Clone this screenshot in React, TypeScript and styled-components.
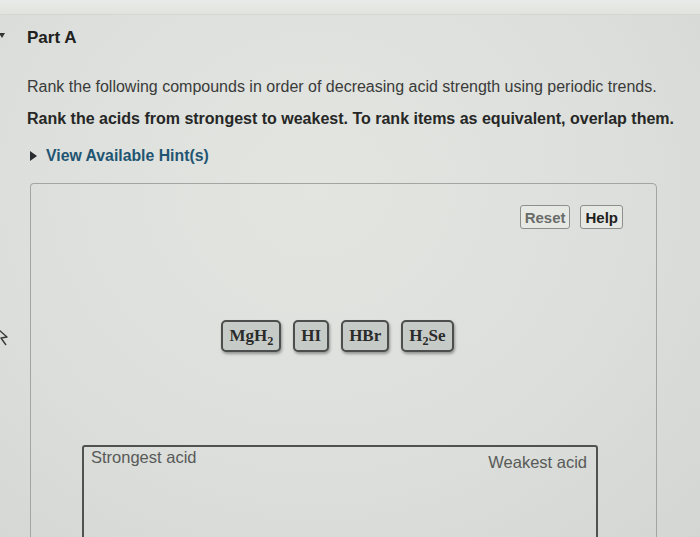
import React from 'react'
import styled, { createGlobalStyle } from 'styled-components'

const GlobalStyle = createGlobalStyle`
  html, body {
    margin: 0;
    padding: 0;
    background: #dcdfdb;
  }
`

const Page = styled.div`
  position: relative;
  height: 537px;
  overflow: hidden;
  background: radial-gradient(ellipse at 45% 35%, #e3e5e1 0%, #dcdfdb 55%, #d3d6d2 100%);
  font-family: 'Liberation Sans', Arial, sans-serif;
  color: #2a2b2a;
`

const TopStrip = styled.div`
  height: 14px;
  background: linear-gradient(#e9ebe8, #e1e3df);
  border-bottom: 1px solid #d4d6d2;
`

const Content = styled.div`
  padding-left: 27px;
`

const PartHeader = styled.h2`
  position: relative;
  margin: 13px 0 0;
  font-size: 17px;
  line-height: 20px;
  font-weight: 700;
  color: #202120;
`

const Collapse = styled.span`
  position: absolute;
  left: -28px;
  top: 5px;
  width: 0;
  height: 0;
  border-left: 3px solid transparent;
  border-right: 3px solid transparent;
  border-top: 5px solid #333;
`

const Prompt = styled.p<{ $bold?: boolean }>`
  margin: ${p => (p.$bold ? '10px' : '28px')} 0 0;
  font-size: 16px;
  line-height: 22px;
  font-weight: ${p => (p.$bold ? 700 : 400)};
  color: ${p => (p.$bold ? '#262726' : '#3a3b3a')};
`

const HintToggle = styled.div`
  display: flex;
  align-items: center;
  gap: 9px;
  margin-top: 15px;
  padding-left: 3px;
  font-size: 15.8px;
  line-height: 22px;
  font-weight: 700;
  color: #1f5572;
`

const Caret = styled.span`
  width: 0;
  height: 0;
  border-top: 5px solid transparent;
  border-bottom: 5px solid transparent;
  border-left: 7px solid #2a2d30;
`

const Panel = styled.section`
  margin: 16px 0 0 3px;
  width: 625px;
  height: 400px;
  border: 1px solid #a2a5a1;
  border-bottom: none;
  border-radius: 4px 5px 0 0;
  display: flex;
  flex-direction: column;
`

const Toolbar = styled.div`
  display: flex;
  justify-content: flex-end;
  gap: 10px;
  padding: 21px 33px 0 0;
`

const ToolButton = styled.button<{ $strong?: boolean }>`
  height: 24px;
  padding: 0 4px;
  background: #e6e8e4;
  border: 1.5px solid #8d8f8c;
  border-radius: 3px;
  font-family: inherit;
  font-size: 15px;
  font-weight: 700;
  color: ${p => (p.$strong ? '#1e1f1e' : '#6a6c6a')};
`

const TileRow = styled.div`
  display: flex;
  justify-content: center;
  gap: 12px;
  margin-top: 91px;
  padding-right: 12px;
`

const Tile = styled.div`
  height: 32px;
  box-sizing: border-box;
  padding: 0 6px;
  display: flex;
  align-items: center;
  background: #c6cbc7;
  border: 2px solid #4b4e4c;
  border-radius: 5px;
  box-shadow: 1px 2px 3px rgba(0, 0, 0, 0.35);
  font-family: 'Liberation Serif', 'Times New Roman', serif;
  font-size: 17px;
  font-weight: 600;
  color: #2a2b2a;
`

const Formula = styled.span`
  line-height: 20px;

  sub {
    font-size: 0.72em;
    line-height: 0;
    vertical-align: -0.3em;
  }
`

const RankBox = styled.div`
  margin: 93px 0 0 51px;
  width: 516px;
  height: 130px;
  box-sizing: border-box;
  border: 2px solid #4f524f;
  border-radius: 3px;
  display: flex;
  justify-content: space-between;
  align-items: flex-start;
  padding: 0 9px 0 7px;
`

const RankLabel = styled.span<{ $drop?: number }>`
  margin-top: ${p => p.$drop ?? 0}px;
  font-size: 16.5px;
  line-height: 18px;
  color: #585a58;
`

const EdgeCursor = styled.svg`
  position: absolute;
  left: -2px;
  top: 328px;
`

const compounds: React.ReactNode[] = [
  <>
    MgH<sub>2</sub>
  </>,
  <>HI</>,
  <>HBr</>,
  <>
    H<sub>2</sub>Se
  </>,
]

export default function App() {
  return (
    <>
      <GlobalStyle />
      <Page>
        <TopStrip />
        <Content>
          <PartHeader>
            <Collapse />
            Part A
          </PartHeader>
          <Prompt>Rank the following compounds in order of decreasing acid strength using periodic trends.</Prompt>
          <Prompt $bold>Rank the acids from strongest to weakest. To rank items as equivalent, overlap them.</Prompt>
          <HintToggle>
            <Caret />
            View Available Hint(s)
          </HintToggle>
          <Panel>
            <Toolbar>
              <ToolButton>Reset</ToolButton>
              <ToolButton $strong>Help</ToolButton>
            </Toolbar>
            <TileRow>
              {compounds.map((c, i) => (
                <Tile key={i}>
                  <Formula>{c}</Formula>
                </Tile>
              ))}
            </TileRow>
            <RankBox>
              <RankLabel $drop={1}>Strongest acid</RankLabel>
              <RankLabel $drop={6}>Weakest acid</RankLabel>
            </RankBox>
          </Panel>
        </Content>
        <EdgeCursor width="12" height="20" viewBox="0 0 12 20">
          <path d="M1 2 L9 9 L3 10 L8 17" fill="none" stroke="#3a3b3a" strokeWidth="1.4" strokeLinejoin="round" />
        </EdgeCursor>
      </Page>
    </>
  )
}
